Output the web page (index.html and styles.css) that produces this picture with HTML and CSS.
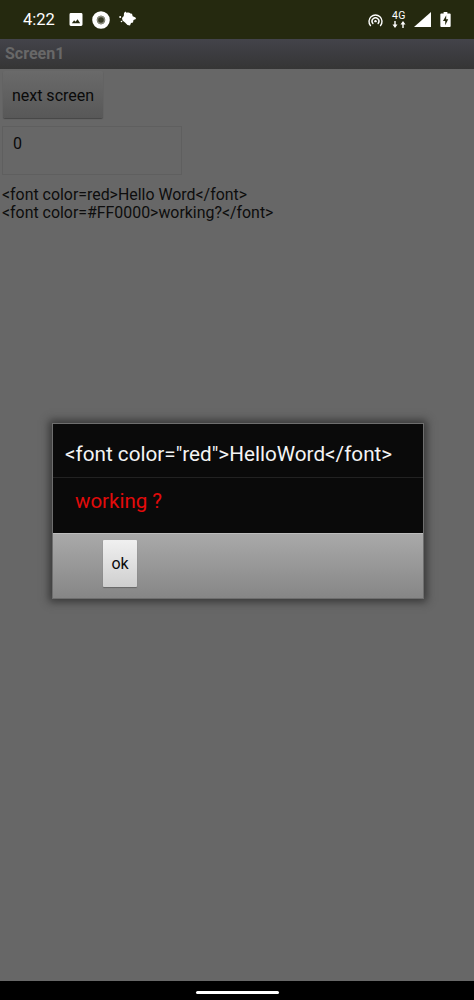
FILE: index.html
```html
<!DOCTYPE html>
<html lang="en">
<head>
<meta charset="utf-8">
<title>Screen1</title>
<link rel="stylesheet" href="styles.css">
</head>
<body>
<div class="phone">
  <header class="status">
    <div class="status-left">
      <span class="time">4:22</span>
      <svg class="ic-photo" viewBox="0 0 14 14"><path fill="#fff" fill-rule="evenodd" d="M1.500 0h11A1.500 1.500 0 0 1 14 1.500v11a1.500 1.500 0 0 1-1.500 1.500h-11A1.500 1.500 0 0 1 0 12.500v-11A1.500 1.500 0 0 1 1.500 0zM2.500 11h9L8.700 6.800 6.500 9.500 5 7.800z"/></svg>
      <svg class="ic-ring" viewBox="0 0 18 18"><circle cx="9" cy="9" r="6.500" fill="none" stroke="#fff" stroke-width="4.600"/><circle cx="9" cy="9" r="4.200" fill="#8c8d80"/><circle cx="9" cy="9" r="2.800" fill="#3a3d28"/></svg>
      <svg class="ic-bug" viewBox="0 0 17 15"><path fill="#fff" d="M5 1.500 6.500 0l1 1.300C9 .6 10.500.8 11.500 2l1.500.3.700 2.500L16.500 6l.5 1.500-2.500 1-.5 2.500-2 .5-1 2.500-2.500-.5L6 11 3.500 9 3 6.500 4.800 4.500z"/><circle cx="1.200" cy="5.500" r="1" fill="#fff"/><circle cx="2.500" cy="10" r=".8" fill="#fff"/></svg>
    </div>
    <div class="status-right">
      <svg class="ic-hotspot" viewBox="0 0 16 14"><g fill="none" stroke="#fff" stroke-width="1.500" stroke-linecap="round"><path d="M2.600 12.500a7 7 0 1 1 10.800 0"/><path d="M5.200 10.300a3.700 3.700 0 1 1 5.600 0"/></g><circle cx="8" cy="7.700" r="1.300" fill="#fff"/></svg>
      <div class="net">
        <span class="net-label">4G</span>
        <svg class="ic-arrows" viewBox="0 0 14 7"><path fill="#fff" d="M2.300 0h1.400v3.500H5.500L3 7 .5 3.500h1.800zM10.300 7h1.400V3.500h1.800L11 0 8.500 3.500h1.800z"/></svg>
      </div>
      <svg class="ic-signal" viewBox="0 0 17 15"><path fill="#fff" d="M17 0v15H0z"/></svg>
      <svg class="ic-battery" viewBox="0 0 11 16"><path fill="#fff" fill-rule="evenodd" d="M3.500 0h4v1.500H10a1 1 0 0 1 1 1V15a1 1 0 0 1-1 1H1a1 1 0 0 1-1-1V2.500a1 1 0 0 1 1-1h2.500zM6.300 3.500 2.800 9.500h2.400V14l3.200-6.200H6.200z"/></svg>
    </div>
  </header>

  <div class="appbar">Screen1</div>

  <main class="content">
    <button class="next-btn">next screen</button>
    <div class="textbox">0</div>
    <p class="html-label">&lt;font color=red&gt;Hello Word&lt;/font&gt;<br>&lt;font color=#FF0000&gt;working?&lt;/font&gt;</p>
  </main>

  <footer class="navbar"><span class="pill"></span></footer>

  <div class="overlay">
    <section class="dialog">
      <h1 class="dialog-title">&lt;font color="red"&gt;HelloWord&lt;/font&gt;</h1>
      <p class="dialog-message">working ?</p>
      <div class="dialog-actions"><button class="ok-btn">ok</button></div>
    </section>
  </div>
</div>
</body>
</html>
```
FILE: styles.css
```css
* { box-sizing: border-box; }
html, body { margin: 0; padding: 0; }
body { width: 474px; height: 1000px; overflow: hidden; font-family: Roboto, "Liberation Sans", sans-serif; }
.phone { position: relative; width: 474px; height: 1000px; display: flex; flex-direction: column; background: #676767; }

.status { height: 39px; flex: none; background: #25290f; display: flex; justify-content: space-between; align-items: center; padding: 0 23px 0 23px; color: #fff; }
.status-left { display: flex; align-items: center; }
.status-right { display: flex; align-items: center; }
.time { font-size: 16.500px; width: 46px; }
.ic-photo { width: 14px; height: 13px; margin-right: 9px; }
.ic-ring { width: 18px; height: 18px; margin-right: 9px; }
.ic-bug { width: 17px; height: 16px; margin-top: -2px; }
.ic-hotspot { width: 15px; height: 13px; margin-right: 9px; margin-top: 1px; }
.net { display: flex; flex-direction: column; align-items: center; width: 14px; margin-right: 8px; }
.net-label { font-size: 10.500px; line-height: 10px; letter-spacing: .5px; }
.ic-arrows { width: 14px; height: 7px; display: block; }
.ic-signal { width: 17px; height: 15px; margin-right: 9px; }
.ic-battery { width: 11px; height: 15px; }

.appbar { height: 30px; flex: none; background: linear-gradient(#43434a, #353535); color: #686868; font: 700 16px/30px Roboto, sans-serif; padding-left: 5px; }

.content { flex: 1; display: flex; flex-direction: column; align-items: flex-start; padding: 2px 0 0 2px; color: #0a0a0a; }
.next-btn { width: 100px; height: 47px; margin-left: 1px; border: 0; border-radius: 2px; background: linear-gradient(#6a6a6a, #585858); box-shadow: 0 1px 1px #454545; color: #0a0a0a; font: 16px/20px Roboto, sans-serif; padding: 2px 0 0; }
.textbox { width: 180px; height: 49px; margin-top: 8px; border: 1px solid #5f5f5f; padding: 7px 10px; font-size: 16px; line-height: 20px; }
.html-label { margin: 11px 0 0; font-size: 15.900px; line-height: 18px; color: #0d0d0d; }

.navbar { height: 19px; flex: none; background: #000; display: flex; justify-content: center; padding-top: 10px; }
.pill { width: 83px; height: 3px; border-radius: 2px; background: #fff; }

.overlay { position: absolute; inset: 0; display: flex; justify-content: flex-start; align-items: flex-start; padding: 423px 0 0 52px; }
.dialog { width: 372px; background: #0a0a0a; border: 1px solid #6e6e6e; box-shadow: 0 0 8px 3px #383838; }
.dialog-title { margin: 0; height: 54px; padding-left: 12px; border-bottom: 1px solid #222; color: #f4f4f4; font: 400 20.700px/60px Roboto, sans-serif; }
.dialog-message { margin: 0; height: 55px; padding-left: 22px; color: #e30b0b; font-size: 20.500px; line-height: 47px; }
.dialog-actions { height: 65px; background: linear-gradient(#a9a9a9, #868686); border-top: 1px solid #bdbdbd; padding: 6px 0 0 50px; }
.ok-btn { display: block; width: 34px; height: 47px; border: 0; border-radius: 1px; background: linear-gradient(#f0f0f0, #cfcfcf); box-shadow: 0 1px 1px #666; color: #0a0a0a; font: 16px Roboto, sans-serif; padding: 0; }
```
